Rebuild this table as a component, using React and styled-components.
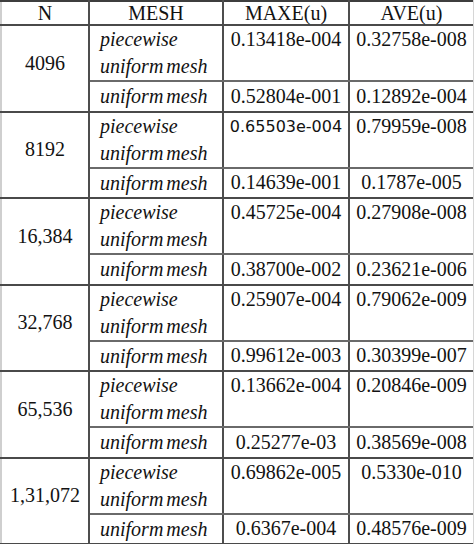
import styled, { createGlobalStyle } from 'styled-components';

const GlobalStyle = createGlobalStyle`
  html, body {
    margin: 0;
    padding: 0;
    background: #ffffff;
  }
  body {
    font-family: 'Liberation Serif', 'Times New Roman', serif;
    color: #121212;
  }
`;

// N, mesh type, MAXE(u), AVE(u)
const results = [
  {
    n: '4096',
    piecewise: ['0.13418e-004', '0.32758e-008'],
    uniform: ['0.52804e-001', '0.12892e-004'],
  },
  {
    n: '8192',
    piecewise: ['0.65503e-004', '0.79959e-008'],
    uniform: ['0.14639e-001', '0.1787e-005'],
    sansMax: true,
  },
  {
    n: '16,384',
    piecewise: ['0.45725e-004', '0.27908e-008'],
    uniform: ['0.38700e-002', '0.23621e-006'],
  },
  {
    n: '32,768',
    piecewise: ['0.25907e-004', '0.79062e-009'],
    uniform: ['0.99612e-003', '0.30399e-007'],
  },
  {
    n: '65,536',
    piecewise: ['0.13662e-004', '0.20846e-009'],
    uniform: ['0.25277e-03', '0.38569e-008'],
  },
  {
    n: '1,31,072',
    piecewise: ['0.69862e-005', '0.5330e-010'],
    uniform: ['0.6367e-004', '0.48576e-009'],
  },
];

const App = () => {
  return (
    <>
      <GlobalStyle />
      <Frame>
        <Table>
          <colgroup>
            <col style={{ width: 88 }} />
            <col style={{ width: 134 }} />
            <col style={{ width: 126 }} />
            <col style={{ width: 125 }} />
          </colgroup>
          <thead>
            <HeadRow>
              <HeadCell>N</HeadCell>
              <HeadCell>MESH</HeadCell>
              <HeadCell>MAXE(u)</HeadCell>
              <HeadCell>AVE(u)</HeadCell>
            </HeadRow>
          </thead>
          <tbody>
            {results.map((el) => (
              <Group key={el.n} el={el} />
            ))}
          </tbody>
        </Table>
      </Frame>
    </>
  );
};

const Group = ({ el }) => (
  <>
    <tr>
      <SizeCell rowSpan={2}>{el.n}</SizeCell>
      <MeshCell>
        <div>piecewise</div>
        <div>uniform mesh</div>
      </MeshCell>
      <ValueCell $top $sans={el.sansMax}>{el.piecewise[0]}</ValueCell>
      <ValueCell $top>{el.piecewise[1]}</ValueCell>
    </tr>
    <tr>
      <MeshCell $inner>uniform mesh</MeshCell>
      <ValueCell $inner>{el.uniform[0]}</ValueCell>
      <ValueCell $inner>{el.uniform[1]}</ValueCell>
    </tr>
  </>
);

const Frame = styled.div`
  width: 474px;
  height: 544px;
  overflow: hidden;
  background: #ffffff;
  border-right: 1px solid #d6d6d6;
  box-sizing: border-box;
`;

const Table = styled.table`
  width: 473px;
  table-layout: fixed;
  border-collapse: collapse;
  background: #ffffff;
  border-left: 2px solid #cfcfcf;
  border-right: 2px solid #4e4e4e;
  border-top: 2px solid #3e3e3e;
  font-size: 20px;
`;

const HeadRow = styled.tr`
  height: 24px;
`;

const HeadCell = styled.th`
  font-weight: 400;
  padding: 0;
  line-height: 22px;
  text-align: center;
  vertical-align: middle;
  border-right: 2px solid #4e4e4e;
  border-bottom: 2px solid #4a4a4a;
`;

const SizeCell = styled.td`
  padding: 0 0 10px 0;
  text-align: center;
  vertical-align: middle;
  border-right: 2px solid #4e4e4e;
  border-bottom: 2px solid #4a4a4a;
`;

const MeshCell = styled.td`
  padding: 0 0 0 10px;
  font-style: italic;
  line-height: ${({ $inner }) => ($inner ? '28.5px' : '27px')};
  word-spacing: -2px;
  text-align: left;
  vertical-align: middle;
  border-right: 2px solid #4e4e4e;
  border-bottom: 2px solid ${({ $inner }) => ($inner ? '#4a4a4a' : '#6a6a6a')};
  white-space: nowrap;
`;

const ValueCell = styled.td`
  padding: 0;
  line-height: 27px;
  text-align: center;
  vertical-align: ${({ $top }) => ($top ? 'top' : 'middle')};
  border-right: 2px solid #4e4e4e;
  border-bottom: 2px solid ${({ $inner }) => ($inner ? '#4a4a4a' : '#6a6a6a')};
  white-space: nowrap;
  font-family: ${({ $sans }) =>
    $sans ? "'DejaVu Sans', Verdana, sans-serif" : "'Liberation Serif', 'Times New Roman', serif"};
  font-size: ${({ $sans }) => ($sans ? '16px' : '20px')};
`;

export default App;
